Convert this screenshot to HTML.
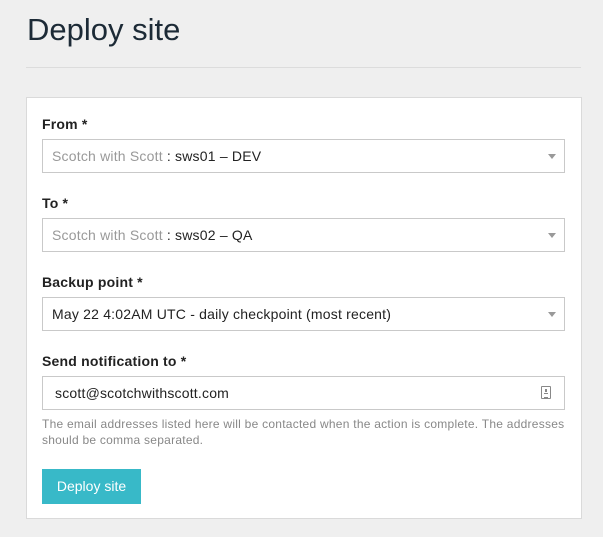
<!DOCTYPE html>
<html><head><style>
*{box-sizing:border-box;margin:0;padding:0}
body{width:603px;height:537px;background:#efefef;font-family:"Liberation Sans",Arial,sans-serif;color:#222;position:relative;overflow:hidden}
h1{position:absolute;left:27px;top:12px;font-size:31px;font-weight:normal;color:#1c2a36;letter-spacing:0}
.rule{position:absolute;left:26px;top:67px;width:555px;height:1px;background:#dcdcdc}
.card{position:absolute;left:26px;top:97px;width:556px;height:422px;background:#fff;border:1px solid #dadada}
.lbl{position:absolute;left:15px;font-size:14px;font-weight:bold;color:#222;letter-spacing:0.2px}
.box{position:absolute;left:15px;width:523px;height:34px;border:1px solid #c9c9c9;background:#fff;font-size:14px;line-height:32px;padding-left:9px;color:#222;letter-spacing:0.2px}
.box .g{color:#999}
.arr{position:absolute;right:8px;top:14px;width:0;height:0;border-left:4px solid transparent;border-right:4px solid transparent;border-top:5px solid #999}
.help{position:absolute;left:15px;top:318px;font-size:12px;line-height:16px;color:#888;letter-spacing:0.25px}
.btn{position:absolute;left:15px;top:371px;width:99px;height:35px;background:#38b9c8;color:#fff;font-size:14px;line-height:35px;text-align:center}
.ic{position:absolute;right:13px;top:9px;width:10px;height:13px;border:1px solid #888;border-radius:1px}
.ic:before{content:"";position:absolute;left:3px;top:2px;width:2px;height:3px;background:#888}
.ic:after{content:"";position:absolute;left:2px;top:6px;width:4px;height:3px;border-top:1px solid #888;border-bottom:1px solid #888}
</style></head><body>
<h1>Deploy site</h1>
<div class="rule"></div>
<div class="card">
<div class="lbl" style="top:18px">From *</div>
<div class="box" style="top:41px"><span class="g">Scotch with Scott</span> : sws01 – DEV<span class="arr"></span></div>
<div class="lbl" style="top:97px">To *</div>
<div class="box" style="top:120px"><span class="g">Scotch with Scott</span> : sws02 – QA<span class="arr"></span></div>
<div class="lbl" style="top:176px">Backup point *</div>
<div class="box" style="top:199px">May 22 4:02AM UTC - daily checkpoint (most recent)<span class="arr"></span></div>
<div class="lbl" style="top:255px">Send notification to *</div>
<div class="box" style="top:278px;padding-left:12px">scott@scotchwithscott.com<span class="ic"></span></div>
<div class="help">The email addresses listed here will be contacted when the action is complete. The addresses<br>should be comma separated.</div>
<div class="btn">Deploy site</div>
</div>
</body></html>
